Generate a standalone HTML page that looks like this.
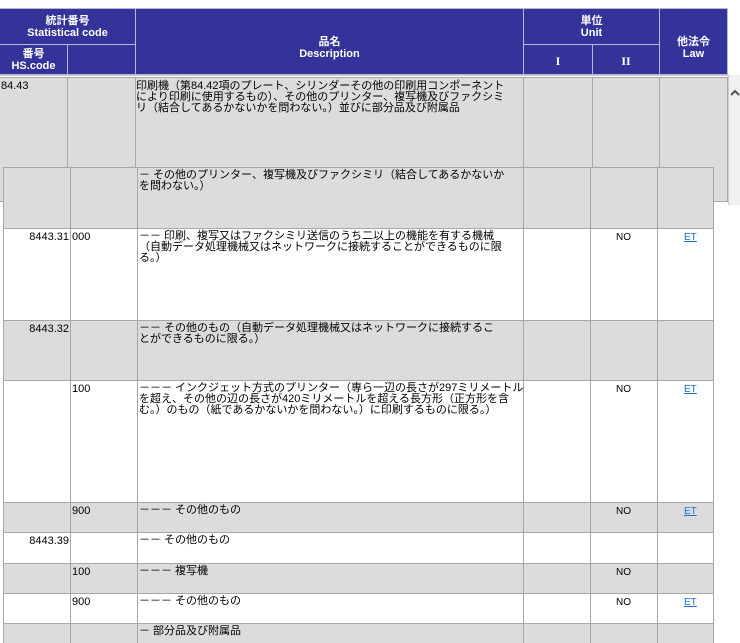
<!DOCTYPE html>
<html><head><meta charset="utf-8"><style>
*{margin:0;padding:0;box-sizing:border-box}
html,body{width:740px;height:643px;overflow:hidden}
body{background:#fff;position:relative;font-family:"Liberation Sans","Noto Sans CJK JP",sans-serif;font-size:11px;line-height:11px;color:#000}
.c{position:absolute;border:1px solid #a8a8a8;overflow:hidden}
.h{position:absolute;background:#333399;border:1px solid #b8b8d8;color:#fff;font-weight:bold;text-align:center;font-size:11px;line-height:12px}
.g{background:#dcdcdc}
.w{background:#fff}
.t{position:absolute;white-space:nowrap;font-size:11px;line-height:11px}
.no{position:absolute;font-size:10px;width:67px;text-align:center}
.et{position:absolute;font-size:10px;color:#1a6fd6;text-decoration:underline}
</style></head><body>
<div class="h" style="left:-1px;top:8px;width:137px;height:37px;padding-top:6px">統計番号<br>Statistical code</div>
<div class="h" style="left:-1px;top:44px;width:69px;height:31px;padding-top:3px">番号<br>HS.code</div>
<div class="h" style="left:67px;top:44px;width:69px;height:31px"></div>
<div class="h" style="left:135px;top:8px;width:389px;height:67px;padding-top:27px">品名<br>Description</div>
<div class="h" style="left:523px;top:8px;width:137px;height:37px;padding-top:6px">単位<br>Unit</div>
<div class="h" style="left:523px;top:44px;width:70px;height:31px;padding-top:10px;font-family:'Liberation Serif',serif;font-size:12px">I</div>
<div class="h" style="left:592px;top:44px;width:68px;height:31px;padding-top:10px;font-family:'Liberation Serif',serif;font-size:12px">II</div>
<div class="h" style="left:659px;top:8px;width:69px;height:67px;padding-top:27px">他法令<br>Law</div>
<div style="position:absolute;left:0;top:75px;width:728px;height:1px;background:#c8c8c8"></div>
<div class="c g" style="left:-1px;top:77px;width:69px;height:125px"></div>
<div class="c g" style="left:67px;top:77px;width:69px;height:125px"></div>
<div class="c g" style="left:135px;top:77px;width:389px;height:125px"></div>
<div class="c g" style="left:523px;top:77px;width:70px;height:125px"></div>
<div class="c g" style="left:592px;top:77px;width:68px;height:125px"></div>
<div class="c g" style="left:659px;top:77px;width:69px;height:125px"></div>
<div class="t" style="left:1px;top:81px">84.43</div>
<div class="t" style="left:136px;top:81px">印刷機（第84.42項のプレート、シリンダーその他の印刷用コンポーネント<br>により印刷に使用するもの）、その他のプリンター、複写機及びファクシミ<br>リ（結合してあるかないかを問わない。）並びに部分品及び附属品</div>
<div style="position:absolute;left:728px;top:75px;width:12px;height:130px;background:#f0f0f0;border-left:1px solid #ccc"></div>
<svg style="position:absolute;left:730px;top:89px" width="10" height="8"><path d="M1 6 L5 2 L9 6" fill="none" stroke="#555" stroke-width="2"/></svg>
<div id="t2"></div>
<script>
var rows=[[167,61,'g','','','－ その他のプリンター、複写機及びファクシミリ（結合してあるかないか<br>を問わない。）','',''],
[228,92,'w','8443.31','000','－－ 印刷、複写又はファクシミリ送信のうち二以上の機能を有する機械<br>（自動データ処理機械又はネットワークに接続することができるものに限<br>る。）','NO','ET'],
[320,60,'g','8443.32','','－－ その他のもの（自動データ処理機械又はネットワークに接続するこ<br>とができるものに限る。）','',''],
[380,122,'w','','100','－－－ インクジェット方式のプリンター（専ら一辺の長さが297ミリメートル<br>を超え、その他の辺の長さが420ミリメートルを超える長方形（正方形を含<br>む。）のもの（紙であるかないかを問わない。）に印刷するものに限る。）','NO','ET'],
[502,30,'g','','900','－－－ その他のもの','NO','ET'],
[532,31,'w','8443.39','','－－ その他のもの','',''],
[563,30,'g','','100','－－－ 複写機','NO',''],
[593,30,'w','','900','－－－ その他のもの','NO','ET'],
[623,40,'g','','','－ 部分品及び附属品','','']];
var cols=[[3,68],[70,69],[137,387],[523,68],[590,68],[657,57]];
var h='';
rows.forEach(function(r){
 cols.forEach(function(c){h+='<div class="c '+r[2]+'" style="left:'+c[0]+'px;top:'+r[0]+'px;width:'+c[1]+'px;height:'+(r[1]+1)+'px"></div>';});
 var y=r[0]+4;
 if(r[3])h+='<div class="t" style="left:3px;width:66px;text-align:right;top:'+y+'px">'+r[3]+'</div>';
 if(r[4])h+='<div class="t" style="left:72px;top:'+y+'px">'+r[4]+'</div>';
 h+='<div class="t" style="left:139px;top:'+(y-1)+'px">'+r[5]+'</div>';
 if(r[6])h+='<div class="no" style="left:590px;top:'+y+'px">'+r[6]+'</div>';
 if(r[7])h+='<div class="et" style="left:684px;top:'+y+'px">'+r[7]+'</div>';
});
document.getElementById('t2').innerHTML=h;
</script>
</body></html>
